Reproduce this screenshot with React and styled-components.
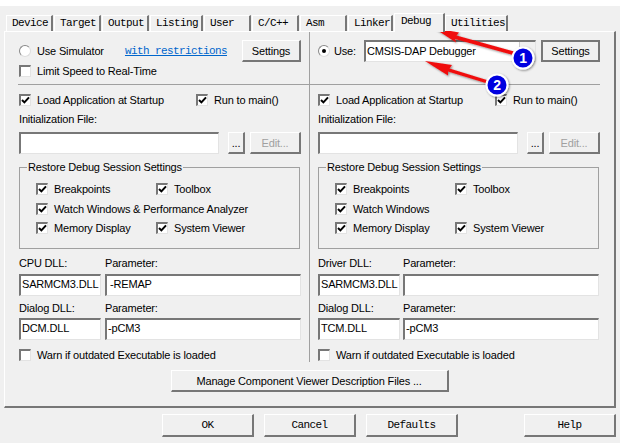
import React from 'react';
import styled, { createGlobalStyle } from 'styled-components';

const GlobalStyle = createGlobalStyle`
  html, body { margin: 0; padding: 0; background: #f0f0f0; }
  * { box-sizing: border-box; }
`;

const Dialog = styled.div`
  position: relative;
  width: 620px;
  height: 443px;
  overflow: hidden;
  background: #f0f0f0;
  color: #000;
  font-family: "Liberation Sans", Arial, sans-serif;
  font-size: 11px;
  letter-spacing: -0.17px;
  border-top: 6px solid #fff;
`;

const TabBar = styled.div`
  display: flex;
  align-items: flex-end;
  height: 25px;
  padding-left: 6px;
  position: relative;
  z-index: 1;
`;

const Tab = styled.div`
  width: ${p => p.$w}px;
  height: ${p => (p.$active ? 19 : 16)}px;
  margin-right: ${p => (p.$active ? 0 : 1)}px;
  margin-bottom: ${p => (p.$active ? -1 : 0)}px;
  padding-left: ${p => (p.$active ? 6 : 5)}px;
  background: #f0f0f0;
  border-top: 1px solid #fff;
  border-left: 1px solid #fff;
  border-right: 2px solid #777;
  font-family: "Liberation Mono", "DejaVu Sans Mono", monospace;
  font-size: 11px;
  letter-spacing: -0.6px;
  line-height: 14px;
  white-space: nowrap;
`;

const Panel = styled.div`
  width: 612px;
  height: 377px;
  margin-left: 4px;
  border-top: 1px solid #fff;
  border-left: 1px solid #fff;
  border-right: 2px solid #777;
  border-bottom: 2px solid #777;
`;

const Columns = styled.div`
  display: grid;
  grid-template-columns: 305px 1fr;
  height: 330px;
`;

const Column = styled.div`
  display: flex;
  flex-direction: column;
  padding-left: ${p => p.$left}px;
  width: ${p => p.$width}px;
  border-right: ${p => (p.$divided ? '1px solid #a0a0a0' : 'none')};
`;

const TopArea = styled.div`
  height: 52px;
  padding: 8px 0 0 0;
  width: 282px;
`;

const TopRow = styled.div`
  display: flex;
  align-items: center;
  height: 22px;
`;

const Separator = styled.div`
  height: 1px;
  margin-left: ${p => p.$inset}px;
  margin-right: ${p => p.$end}px;
  background: #a0a0a0;
  flex: none;
`;

const LowerArea = styled.div`
  width: 282px;
  display: flex;
  flex-direction: column;
  padding-top: 9px;
`;

const CheckRow = styled.div`
  display: flex;
  align-items: center;
  height: 12px;
  margin-top: ${p => p.$top || 0}px;
`;

const CheckItem = styled.div`
  display: flex;
  align-items: center;
  gap: ${p => p.$gap ?? 6}px;
  width: ${p => (p.$w ? `${p.$w}px` : 'auto')};
  grid-column: ${p => (p.$span ? '1 / 3' : 'auto')};
  white-space: nowrap;
  line-height: 12px;
`;

const Box = styled.span`
  display: inline-flex;
  flex: none;
  width: 12px;
  height: 12px;
  background: #fff;
  border-top: 2px solid #777;
  border-left: 2px solid #777;
  border-right: 1px solid #e3e3e3;
  border-bottom: 1px solid #e3e3e3;
`;

const Radio = styled.span`
  display: inline-flex;
  align-items: center;
  justify-content: center;
  flex: none;
  width: 12px;
  height: 12px;
  border-radius: 50%;
  background: #fff;
  border: 1.5px solid;
  border-color: #888 #ddd #ddd #888;

  &::after {
    content: "";
    width: 4px;
    height: 4px;
    border-radius: 50%;
    background: ${p => (p.$on ? '#000' : 'transparent')};
  }
`;

const Label = styled.div`
  height: 12px;
  line-height: 12px;
  margin-top: ${p => p.$top || 0}px;
  white-space: nowrap;
`;

const LinkText = styled.a`
  font-family: "Liberation Mono", "DejaVu Sans Mono", monospace;
  font-size: 11px;
  letter-spacing: -0.6px;
  color: #0066cc;
  text-decoration: underline;
  white-space: nowrap;
`;

const Button = styled.button`
  flex: none;
  width: ${p => p.$w}px;
  height: ${p => p.$h || 22}px;
  margin: 0 0 0 ${p => p.$ml || 0}px;
  padding: 0;
  background: #f0f0f0;
  color: ${p => (p.$disabled ? '#a0a0a0' : '#000')};
  font-family: ${p => (p.$mono ? '"Liberation Mono", "DejaVu Sans Mono", monospace' : '"Liberation Sans", Arial, sans-serif')};
  font-size: 11px;
  letter-spacing: ${p => (p.$mono ? '-0.6px' : '-0.17px')};
  border-style: solid;
  border-width: 1px 2px 2px 1px;
  border-color: #fff #777 #777 #fff;
  border-radius: 0;
  ${p => p.$default && 'border: 2px solid #777;'}
`;

const FileRow = styled.div`
  display: flex;
  align-items: flex-start;
  margin-top: 7px;
  height: 22px;
`;

const Field = styled.div`
  width: ${p => (p.$w ? `${p.$w}px` : 'auto')};
  height: 22px;
  flex: ${p => (p.$w ? 'none' : '1')};
  padding-left: ${p => p.$pad ?? 1}px;
  background: #fff;
  border-top: 2px solid #777;
  border-left: 2px solid #777;
  border-right: 1px solid #e3e3e3;
  border-bottom: 1px solid #e3e3e3;
  line-height: 16px;
  white-space: nowrap;
  overflow: hidden;
`;

const Combo = styled(Field)`
  position: relative;
  width: 172px;
  flex: none;
  letter-spacing: -0.2px;
  line-height: 19px;
  padding-left: 1px;
`;

const ComboArrow = styled.span`
  position: absolute;
  top: 0;
  right: 0;
  width: 16px;
  height: 19px;
  background: #f0f0f0;
  border-left: 1px solid #ccc;
`;

const Group = styled.fieldset`
  margin: 7px 0 0;
  padding: 0 0 0 16px;
  height: 88px;
  width: 281px;
  border: 1px solid #a0a0a0;
  min-width: 0;
`;

const GroupTitle = styled.legend`
  margin-left: -9px;
  padding: 0 1px;
  line-height: 12px;
`;

const GroupGrid = styled.div`
  display: grid;
  grid-template-columns: 120px 1fr;
  grid-template-rows: 21px 20px 18px;
  align-items: center;
  margin-top: 5px;
`;

const DllGrid = styled.div`
  display: grid;
  grid-template-columns: 82px ${p => p.$second}px;
  grid-template-rows: 17px 28px 16px 22px;
  column-gap: ${p => p.$gap}px;
  margin-top: 8px;
`;

const FooterRow = styled.div`
  display: flex;
  justify-content: center;
  margin-top: 8px;
`;

const DialogButtons = styled.div`
  display: flex;
  align-items: flex-start;
  gap: 10px;
  margin-top: 6px;
  padding-left: 162px;
`;

const HelpSlot = styled.div`
  margin-left: 56px;
`;

const Overlay = styled.svg`
  position: absolute;
  left: 0;
  top: -6px;
  pointer-events: none;
`;

const tabs = [
  ['Device', 47], ['Target', 47], ['Output', 47], ['Listing', 53], ['User', 47],
  ['C/C++', 47], ['Asm', 47], ['Linker', 45], ['Debug', 51], ['Utilities', 63],
];

const Check = ({ on = true }) => (
  <Box>
    {on && (
      <svg width="9" height="9" viewBox="0 0 9 9">
        <path d="M1 4 L3.4 6.4 L8 1.4" fill="none" stroke="#000" strokeWidth="2" />
      </svg>
    )}
  </Box>
);

const CheckText = ({ children, on, w, span }) => (
  <CheckItem $w={w} $span={span}>
    <Check on={on} />
    {children}
  </CheckItem>
);

const Lower = ({ watch, firstLabel, firstDll, firstParam, dialogDll, gap }) => (
  <LowerArea>
    <CheckRow>
      <CheckText w={177}>Load Application at Startup</CheckText>
      <CheckText>Run to main()</CheckText>
    </CheckRow>
    <Label $top={7}>Initialization File:</Label>
    <FileRow>
      <Field $w={200} />
      <Button $w={17} $ml={9}>...</Button>
      <Button $w={51} $ml={5} $disabled>Edit...</Button>
    </FileRow>
    <Group>
      <GroupTitle>Restore Debug Session Settings</GroupTitle>
      <GroupGrid>
        <CheckText>Breakpoints</CheckText>
        <CheckText>Toolbox</CheckText>
        <CheckText span>{watch}</CheckText>
        <CheckText>Memory Display</CheckText>
        <CheckText>System Viewer</CheckText>
      </GroupGrid>
    </Group>
    <DllGrid $gap={gap} $second={196}>
      <Label>{firstLabel}</Label>
      <Label>Parameter:</Label>
      <Field>{firstDll}</Field>
      <Field $pad={3}>{firstParam}</Field>
      <Label>Dialog DLL:</Label>
      <Label>Parameter:</Label>
      <Field>{dialogDll}</Field>
      <Field>-pCM3</Field>
    </DllGrid>
    <CheckRow $top={9}>
      <CheckText on={false}>Warn if outdated Executable is loaded</CheckText>
    </CheckRow>
  </LowerArea>
);

const App = () => (
  <Dialog>
    <GlobalStyle />
    <TabBar>
      {tabs.map(([name, w]) => (
        <Tab key={name} $w={w} $active={name === 'Debug'}>{name}</Tab>
      ))}
    </TabBar>
    <Panel>
      <Columns>
        <Column $left={14} $width={305} $divided>
          <TopArea>
            <TopRow>
              <CheckItem $w={107}><Radio />Use Simulator</CheckItem>
              <LinkText>with restrictions</LinkText>
              <Button $w={59} $ml={15}>Settings</Button>
            </TopRow>
            <CheckRow $top={3}>
              <CheckText on={false}>Limit Speed to Real-Time</CheckText>
            </CheckRow>
          </TopArea>
          <Separator $inset={-1} $end={0} />
          <Lower watch="Watch Windows & Performance Analyzer" firstLabel="CPU DLL:" firstDll="SARMCM3.DLL" firstParam="-REMAP" dialogDll="DCM.DLL" gap={4} />
        </Column>
        <Column $left={8} $width={305}>
          <TopArea>
            <TopRow>
              <CheckItem $w={46} $gap={4}><Radio $on />Use:</CheckItem>
              <Combo>CMSIS-DAP Debugger<ComboArrow /></Combo>
              <Button $w={59} $ml={5} $default>Settings</Button>
            </TopRow>
          </TopArea>
          <Separator $inset={-8} $end={15} />
          <Lower watch="Watch Windows" firstLabel="Driver DLL:" firstDll="SARMCM3.DLL" firstParam="" dialogDll="TCM.DLL" gap={3} />
        </Column>
      </Columns>
      <FooterRow>
        <Button $w={278} $h={22}>Manage Component Viewer Description Files ...</Button>
      </FooterRow>
    </Panel>
    <DialogButtons>
      <Button $w={92} $h={23} $mono>OK</Button>
      <Button $w={92} $h={23} $mono>Cancel</Button>
      <Button $w={92} $h={23} $mono>Defaults</Button>
      <HelpSlot><Button $w={92} $h={23} $mono>Help</Button></HelpSlot>
    </DialogButtons>
    <Overlay width="620" height="443" viewBox="0 0 620 443">
      <defs>
        <filter id="soft" x="-20%" y="-20%" width="140%" height="140%">
          <feDropShadow dx="1" dy="1" stdDeviation="1" floodColor="#000" floodOpacity="0.45" />
        </filter>
      </defs>
      <g filter="url(#soft)" fill="#f01010">
        <path d="M434 28 L459 32.5 L456.5 35.5 L516 52 L515 55.5 L455 39 L456 42.5 Z" />
        <path d="M425 61 L452 65 L449.5 68.5 L490 81 L489 84 L448 71.5 L448 75.5 Z" />
      </g>
      <g filter="url(#soft)">
        <circle cx="523" cy="58" r="10.5" fill="#0000e0" stroke="#fff" strokeWidth="2" />
        <circle cx="497" cy="85" r="10.5" fill="#0000e0" stroke="#fff" strokeWidth="2" />
      </g>
      <text x="523" y="63" textAnchor="middle" fill="#fff" fontSize="14" fontWeight="700" fontFamily="Liberation Sans, sans-serif">1</text>
      <text x="497" y="90" textAnchor="middle" fill="#fff" fontSize="14" fontWeight="700" fontFamily="Liberation Sans, sans-serif">2</text>
    </Overlay>
  </Dialog>
);

export default App;
